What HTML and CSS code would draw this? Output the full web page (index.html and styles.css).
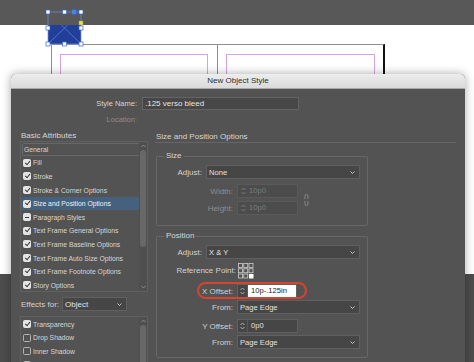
FILE: index.html
```html
<!DOCTYPE html>
<html lang="en">
<head>
<meta charset="utf-8">
<title>New Object Style</title>
<link rel="stylesheet" href="styles.css">
</head>
<body>
<div class="app">
  <div class="toolbar"></div>
  <div class="canvas">
    <div class="spread">
      <div class="page page-left"><div class="guide"></div></div>
      <div class="page page-right"><div class="guide"></div></div>
    </div>
  </div>
  <div class="pasteboard"></div>
</div>

<svg class="frame-sel" width="42" height="40" viewBox="44 8 42 40">
  <defs><clipPath id="vis"><rect x="48" y="25" width="33" height="19"/></clipPath></defs>
  <g clip-path="url(#vis)">
    <rect x="48" y="12" width="33" height="32" fill="#213f99"/>
    <path d="M48 12 L81 44 M81 12 L48 44" stroke="#5b80d8" stroke-width="0.8" fill="none"/>
  </g>
  <rect x="48" y="12" width="33" height="32" fill="none" stroke="#6f8fdc" stroke-width="0.7"/>
  <g fill="#fff" stroke="#3a66c8" stroke-width="0.7">
    <rect x="46" y="10" width="4" height="4"/>
    <rect x="62.5" y="10" width="4" height="4"/>
    <rect x="79" y="10" width="4" height="4"/>
    <rect x="46" y="26" width="4" height="4"/>
    <rect x="79" y="26" width="4" height="4"/>
    <rect x="46" y="42" width="4" height="4"/>
    <rect x="62.5" y="42" width="4" height="4"/>
    <rect x="79" y="42" width="4" height="4"/>
  </g>
  <rect x="71.5" y="9.5" width="5" height="5" fill="#4a86e0" stroke="#2f5cb8" stroke-width="0.6"/>
  <rect x="79" y="21" width="4" height="4" fill="#e6e05a" stroke="#9a9a40" stroke-width="0.5"/>
</svg>

<div class="dialog">
  <div class="titlebar">New Object Style</div>
  <div class="dialog-body">
    <div class="head">
      <span class="lbl">Style Name:</span>
      <div class="textfield">.125 verso bleed</div>
      <span class="lbl dim">Location:</span>
      <span></span>
    </div>

    <div class="cols">
      <div class="left">
        <div class="heading">Basic Attributes</div>
        <div class="listbox main-list">
          <ul class="items">
            <li class="item group">General</li>
            <li class="item"><span class="cb on"></span>Fill</li>
            <li class="item"><span class="cb on"></span>Stroke</li>
            <li class="item"><span class="cb on"></span>Stroke &amp; Corner Options</li>
            <li class="item selected"><span class="cb on"></span>Size and Position Options</li>
            <li class="item"><span class="cb mixed"></span>Paragraph Styles</li>
            <li class="item"><span class="cb on"></span>Text Frame General Options</li>
            <li class="item"><span class="cb on"></span>Text Frame Baseline Options</li>
            <li class="item"><span class="cb on"></span>Text Frame Auto Size Options</li>
            <li class="item"><span class="cb on"></span>Text Frame Footnote Options</li>
            <li class="item"><span class="cb on"></span>Story Options</li>
          </ul>
          <div class="scroll">
            <svg class="arrow" width="5" height="4" viewBox="0 0 5 4"><path d="M0.5 3 L2.5 1 L4.5 3" stroke="#9a9a9a" stroke-width="0.8" fill="none"/></svg>
            <div class="thumb"></div>
            <div class="spacer"></div>
            <svg class="arrow" width="5" height="4" viewBox="0 0 5 4"><path d="M0.5 1 L2.5 3 L4.5 1" stroke="#9a9a9a" stroke-width="0.8" fill="none"/></svg>
          </div>
        </div>

        <div class="effects">
          <span class="lbl fx-lbl">Effects for:</span>
          <div class="select fx-select"><span>Object</span>
            <svg width="5" height="3" viewBox="0 0 5 3"><path d="M0.5 0.5 L2.5 2.5 L4.5 0.5" stroke="#d0d0d0" stroke-width="0.9" fill="none"/></svg>
          </div>
        </div>

        <div class="listbox fx-list">
          <ul class="items">
            <li class="item"><span class="cb on"></span>Transparency</li>
            <li class="item"><span class="cb"></span>Drop Shadow</li>
            <li class="item"><span class="cb"></span>Inner Shadow</li>
            <li class="item"><span class="cb"></span></li>
          </ul>
          <div class="scroll">
            <svg class="arrow" width="5" height="4" viewBox="0 0 5 4"><path d="M0.5 3 L2.5 1 L4.5 3" stroke="#9a9a9a" stroke-width="0.8" fill="none"/></svg>
            <div class="thumb"></div>
          </div>
        </div>
      </div>

      <div class="right">
        <div class="heading sect">Size and Position Options</div>

        <fieldset class="group size-group">
          <legend>Size</legend>
          <div class="row row-adjust">
            <span class="lbl w-short">Adjust:</span>
            <div class="select wide"><span>None</span>
              <svg width="5" height="3" viewBox="0 0 5 3"><path d="M0.5 0.5 L2.5 2.5 L4.5 0.5" stroke="#d0d0d0" stroke-width="0.9" fill="none"/></svg>
            </div>
          </div>
          <div class="wh">
            <span class="lbl dim">Width:</span>
            <div class="numfield disabled">
              <span class="stepper"><svg width="5" height="8" viewBox="0 0 5 8"><path d="M0.5 3 L2.5 1 L4.5 3 M0.5 5 L2.5 7 L4.5 5" stroke="#8a8a8a" stroke-width="0.8" fill="none"/></svg></span>
              <span class="val">10p0</span>
            </div>
            <svg class="chain" width="5" height="12" viewBox="0 0 5 12"><path d="M1 5 V2 a1.5 1.5 0 0 1 3 0 V5 M1 7 V10 a1.5 1.5 0 0 0 3 0 V7" stroke="#8c8c8c" stroke-width="0.9" fill="none"/></svg>
            <span class="lbl dim">Height:</span>
            <div class="numfield disabled">
              <span class="stepper"><svg width="5" height="8" viewBox="0 0 5 8"><path d="M0.5 3 L2.5 1 L4.5 3 M0.5 5 L2.5 7 L4.5 5" stroke="#8a8a8a" stroke-width="0.8" fill="none"/></svg></span>
              <span class="val">10p0</span>
            </div>
          </div>
        </fieldset>

        <fieldset class="group pos-group">
          <legend>Position</legend>
          <div class="row row-adjust">
            <span class="lbl w-short">Adjust:</span>
            <div class="select wide"><span>X &amp; Y</span>
              <svg width="5" height="3" viewBox="0 0 5 3"><path d="M0.5 0.5 L2.5 2.5 L4.5 0.5" stroke="#d0d0d0" stroke-width="0.9" fill="none"/></svg>
            </div>
          </div>
          <div class="row row-ref">
            <span class="lbl w-ref">Reference Point:</span>
            <svg class="refpt" width="16" height="16" viewBox="0 0 16 16">
              <g fill="none" stroke="#cfcfcf" stroke-width="0.8">
                <rect x="0.5" y="0.5" width="4" height="4"/><rect x="5.75" y="0.5" width="4" height="4"/><rect x="11" y="0.5" width="4" height="4"/>
                <rect x="0.5" y="5.75" width="4" height="4"/><rect x="5.75" y="5.75" width="4" height="4"/><rect x="11" y="5.75" width="4" height="4"/>
                <rect x="0.5" y="11" width="4" height="4"/><rect x="5.75" y="11" width="4" height="4"/>
              </g>
              <rect x="11" y="11" width="4.5" height="4.5" fill="#ffffff"/>
            </svg>
          </div>
          <div class="row row-x">
            <span class="lbl w-long">X Offset:</span>
            <div class="numfield active">
              <span class="stepper"><svg width="5" height="8" viewBox="0 0 5 8"><path d="M0.5 3 L2.5 1 L4.5 3 M0.5 5 L2.5 7 L4.5 5" stroke="#c8c8c8" stroke-width="0.8" fill="none"/></svg></span>
              <span class="val">10p-.125in</span>
            </div>
            <span class="ring"></span>
          </div>
          <div class="row row-from">
            <span class="lbl w-long">From:</span>
            <div class="select mid"><span>Page Edge</span>
              <svg width="5" height="3" viewBox="0 0 5 3"><path d="M0.5 0.5 L2.5 2.5 L4.5 0.5" stroke="#d0d0d0" stroke-width="0.9" fill="none"/></svg>
            </div>
          </div>
          <div class="row row-y">
            <span class="lbl w-long">Y Offset:</span>
            <div class="numfield">
              <span class="stepper"><svg width="5" height="8" viewBox="0 0 5 8"><path d="M0.5 3 L2.5 1 L4.5 3 M0.5 5 L2.5 7 L4.5 5" stroke="#c8c8c8" stroke-width="0.8" fill="none"/></svg></span>
              <span class="val">0p0</span>
            </div>
          </div>
          <div class="row row-from">
            <span class="lbl w-long">From:</span>
            <div class="select mid"><span>Page Edge</span>
              <svg width="5" height="3" viewBox="0 0 5 3"><path d="M0.5 0.5 L2.5 2.5 L4.5 0.5" stroke="#d0d0d0" stroke-width="0.9" fill="none"/></svg>
            </div>
          </div>
        </fieldset>
      </div>
    </div>
  </div>
</div>
</body>
</html>
```

FILE: styles.css
```css
* { box-sizing: border-box; margin: 0; padding: 0; }
html, body { width: 474px; height: 362px; overflow: hidden; }
body {
  position: relative;
  background: #ffffff;
  font-family: "Liberation Sans", Arial, sans-serif;
  color: #d4d4d4;
}
ul { list-style: none; }

/* ---------- document canvas ---------- */
.app { display: flex; flex-direction: column; height: 362px; }
.toolbar { flex: none; height: 25px; background: #585858; }
.canvas { flex: none; height: 249px; background: #ffffff; overflow: hidden; }
.pasteboard { flex: 1; background: #4d4d4d; }

.spread {
  display: flex;
  margin: 19px 0 0 51px;
  width: 334px;
  height: 260px;
  border-top: 1px solid #8e8e8e;
  border-left: 1px solid #8e8e8e;
  border-right: 2px solid #111111;
}
.page { padding: 9px 0 0 8px; height: 100%; }
.page-left { width: 166px; border-right: 1px solid #8e8e8e; }
.page-right { width: 165px; }
.guide {
  height: 100%;
  border: 1px solid #d8a2ea;
  border-bottom: none;
}
.page-left .guide { width: 148px; }
.page-right .guide { width: 149px; }

.frame-sel { position: absolute; left: 44px; top: 8px; }

/* ---------- dialog ---------- */
.dialog {
  position: absolute;
  left: 11px;
  top: 74px;
  width: 454px;
  height: 300px;
  background: #535353;
  border-radius: 5px 5px 0 0;
  box-shadow: 0 0 10px rgba(0, 0, 0, 0.35);
  overflow: hidden;
}
.titlebar {
  height: 15px;
  background: linear-gradient(#ededed, #dadada);
  border-bottom: 1px solid #a9a9a9;
  text-align: center;
  font-size: 8px;
  line-height: 14px;
  color: #2e2e2e;
}
.dialog-body { padding: 0 9px; }

.lbl { font-size: 8px; color: #d2d2d2; white-space: nowrap; }
.lbl.dim { color: #8e8e8e; }

.head {
  display: grid;
  grid-template-columns: 117px 157px;
  grid-template-rows: 13px 12px;
  column-gap: 5px;
  row-gap: 4px;
  padding-top: 8px;
}
.head .lbl { text-align: right; font-size: 7.5px; line-height: 13px; }
.head .lbl.dim { line-height: 12px; }
.textfield {
  height: 13px;
  background: #474747;
  border: 1px solid #646464;
  font-size: 8px;
  line-height: 11px;
  padding-left: 2px;
  color: #e6e6e6;
}

.cols { display: flex; gap: 7px; margin-top: 5px; }
.left { width: 128px; flex: none; min-width: 0; }
.right { width: 301px; flex: none; min-width: 0; }

.heading {
  font-size: 8px;
  line-height: 10px;
  height: 10px;
  padding-left: 1px;
  color: #d6d6d6;
}
.heading.sect {
  height: 12px;
  line-height: 11px;
  border-bottom: 1px solid #666666;
}

/* list boxes */
.listbox {
  display: flex;
  width: 128px;
  overflow: hidden;
  border: 1px solid #606060;
  background: #535353;
}
.main-list { height: 151px; }
.fx-list { height: 60px; margin-top: 5px; }
.items { flex: 1 1 0; min-width: 0; overflow: hidden; padding-top: 0.5px; }
.item {
  height: 13.6px;
  display: flex;
  align-items: center;
  gap: 2px;
  padding-left: 2px;
  font-size: 6.8px;
  color: #d6d6d6;
  white-space: nowrap;
  overflow: hidden;
}
.item.group { padding-left: 1px; }
.item.selected { background: #46617e; color: #f2f2f2; }

.cb {
  position: relative;
  flex: none;
  width: 8px;
  height: 8px;
  border: 1px solid #b4b4b4;
  border-radius: 1.5px;
}
.cb.on, .cb.mixed { background: #e4e4e4; border-color: #e4e4e4; }
.cb.on::after {
  content: "";
  position: absolute;
  left: 1.6px;
  top: -0.4px;
  width: 2.4px;
  height: 4.2px;
  border-right: 1.4px solid #3a3a3a;
  border-bottom: 1.4px solid #3a3a3a;
  transform: rotate(40deg);
}
.cb.mixed::after {
  content: "";
  position: absolute;
  left: 1px;
  top: 2.5px;
  width: 4px;
  height: 1.2px;
  background: #3a3a3a;
}

.scroll {
  flex: none;
  width: 8px;
  display: flex;
  flex-direction: column;
  align-items: center;
  padding: 2px 0 2px;
  background: #4f4f4f;
}
.scroll .arrow { flex: none; }
.scroll .thumb {
  flex: none;
  width: 6px;
  height: 97px;
  margin-top: 2px;
  background: #686868;
  border-radius: 3px;
}
.fx-list .thumb { height: 60px; }
.scroll .spacer { flex: 1; }

.effects {
  display: flex;
  align-items: center;
  gap: 3px;
  height: 14px;
  margin-top: 5px;
  padding-left: 1px;
}
.fx-lbl { width: 38px; }

/* selects and fields */
.select {
  height: 14px;
  display: flex;
  align-items: center;
  justify-content: space-between;
  padding: 0 4px 0 2px;
  background: #464646;
  border: 1px solid #606060;
  font-size: 7.6px;
  color: #e2e2e2;
}
.fx-select { width: 65px; font-size: 8px; }
.select.wide { width: 154px; }
.select.mid { width: 123px; }

.numfield {
  width: 61px;
  height: 14px;
  display: flex;
  align-items: stretch;
  background: #464646;
  border: 1px solid #606060;
  font-size: 7.6px;
  color: #e0e0e0;
}
.numfield .stepper {
  width: 10px;
  flex: none;
  display: flex;
  align-items: center;
  justify-content: center;
  border-right: 1px solid #5a5a5a;
}
.numfield .val { flex: 1; padding-left: 3px; line-height: 12px; }
.numfield.disabled { background: #4c4c4c; border-color: #5a5a5a; color: #7c7c7c; }
.numfield.disabled .stepper { border-right: none; }
.numfield.disabled .val { padding-left: 1px; }
.numfield.active { width: 60px; }
.numfield.active .val { background: #ffffff; color: #222222; padding-left: 3px; }

/* group boxes */
.group {
  width: 212px;
  margin-left: 1px;
  border: 1px solid #686868;
  border-radius: 2px;
  padding: 0 0 0 1px;
  min-width: 0;
}
.group legend {
  font-size: 8px;
  line-height: 10px;
  padding: 0 2px;
  margin-left: 6px;
  color: #d6d6d6;
}
.size-group { margin-top: 8px; padding-bottom: 10px; }
.pos-group { margin-top: 5px; padding-bottom: 8px; }

.row { display: flex; align-items: center; gap: 4px; position: relative; }
.row .lbl { text-align: right; flex: none; }
.w-short { width: 44px; }
.w-long { width: 75px; }
.w-ref { width: 78px; }
.row-adjust { height: 14px; margin-top: 4px; }
.row-ref { height: 17px; margin-top: 3px; gap: 2px; }
.row-x { height: 14px; margin-top: 5px; }
.row-from { height: 14px; margin-top: 2px; }
.row-y { height: 14px; margin-top: 5px; }

.wh {
  display: grid;
  grid-template-columns: 75px 61px 12px;
  grid-template-rows: 14px 14px;
  column-gap: 4px;
  row-gap: 3px;
  align-items: center;
  margin-top: 5px;
}
.wh .lbl { text-align: right; }
.wh .chain { grid-column: 3; grid-row: 1 / 3; margin-left: 2px; align-self: center; }

.ring {
  position: absolute;
  left: 39px;
  top: -2px;
  width: 110px;
  height: 17px;
  border: 2px solid #d9432f;
  border-radius: 9px;
}
```
